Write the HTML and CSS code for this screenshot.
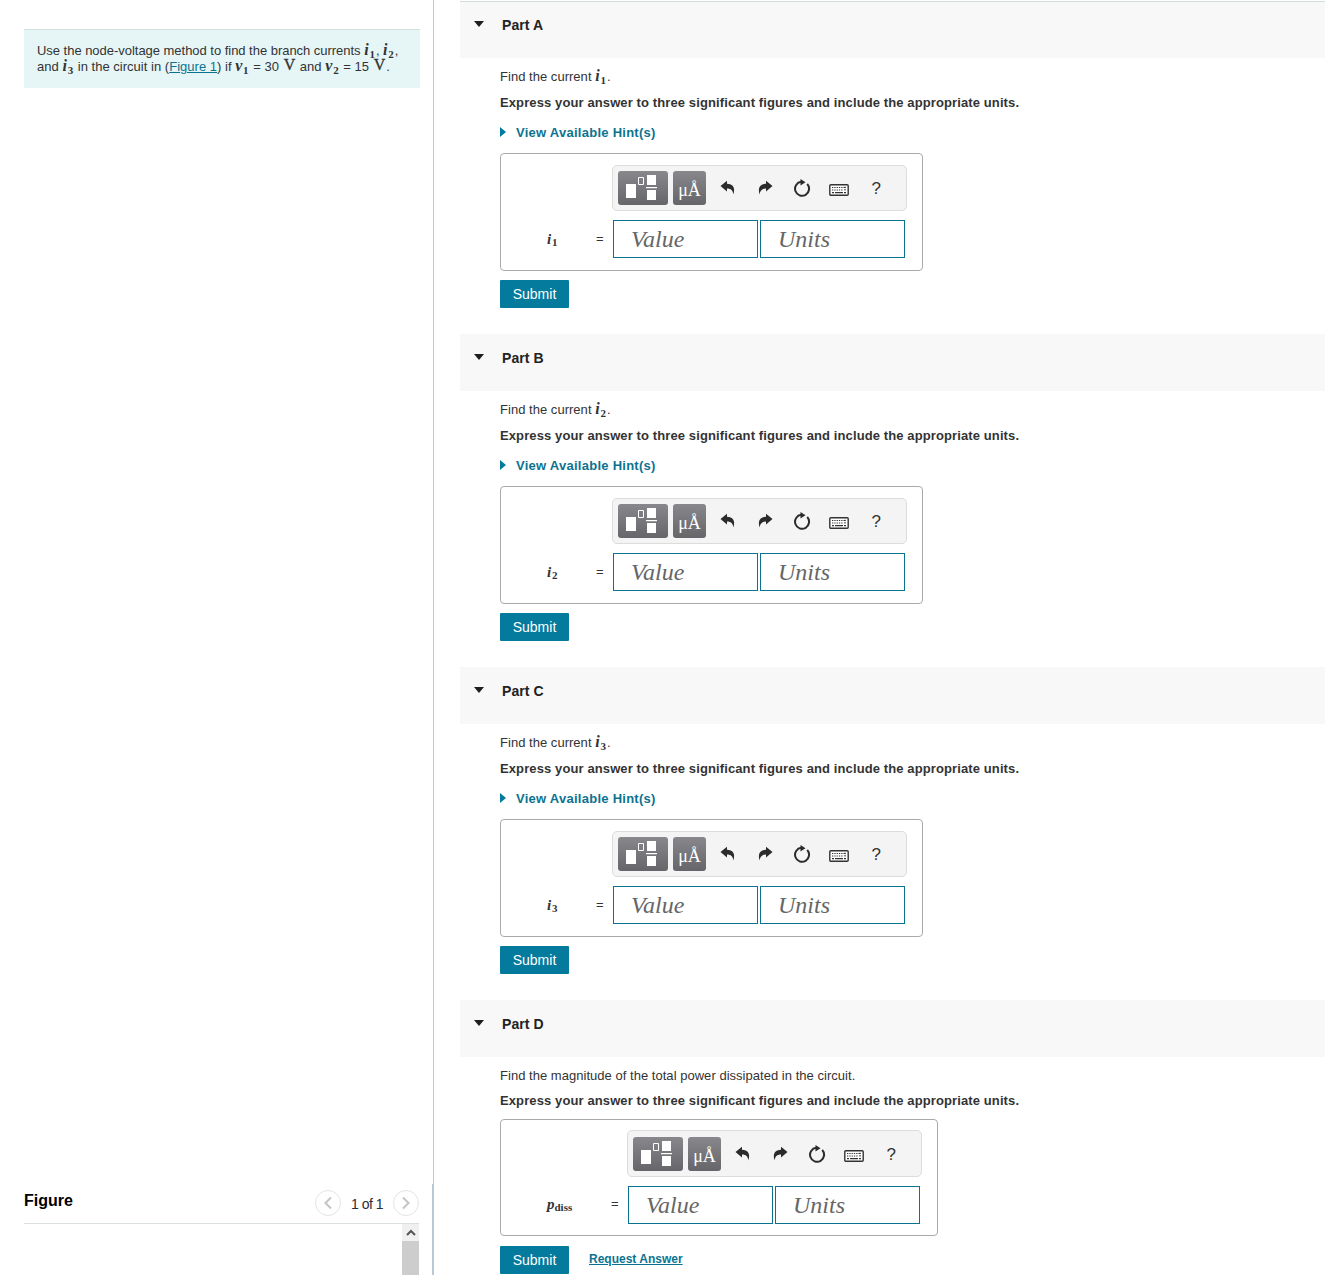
FILE: index.html
```html
<!DOCTYPE html>
<html lang="en">
<head>
  <meta charset="UTF-8" />
  <title>Node-voltage method</title>
  <link rel="stylesheet" href="styles.css">
</head>
<body>
  <!-- Shared icons -->
  <svg class="defs" width="0" height="0">
    <symbol id="templates" viewBox="0 0 50 34">
      <path d="M8 13h10v14H8zM29 4h9v10h-9zM29 19h9v10h-9zM28 16h11v1.300H28z" fill="#fff"/>
      <path d="M20.500 6.500h5v7h-5z" fill="none" stroke="#fff"/>
    </symbol>
    <symbol id="undo" viewBox="0 0 16 16">
      <path d="M.5 6L7 .8v3C12.500 3.800 15.800 7.500 13.300 14.500C13 10.500 11 8.500 7 8.500V11.500z" fill="#2b2b2b"/>
    </symbol>
    <symbol id="redo" viewBox="0 0 16 16">
      <path d="M15.500 6L9 .8v3C3.500 3.800 .2 7.500 2.700 14.500C3 10.500 5 8.500 9 8.500V11.500z" fill="#2b2b2b"/>
    </symbol>
    <symbol id="reset" viewBox="0 0 18 18">
      <path d="M14.200 5A7 7 0 1 1 8.300 2.800" fill="none" stroke="#2b2b2b" stroke-width="2"/>
      <path d="M7.500 0l5 3.200L7.500 6.500z" fill="#2b2b2b"/>
    </symbol>
    <symbol id="keyboard" viewBox="0 0 20 12">
      <rect x=".8" y=".8" width="18.400" height="10.400" rx="1" fill="#fff" stroke="#333" stroke-width="1.400"/>
      <path d="M3 3.500h14M3 6h11.500M16 2.800v4" fill="none" stroke="#333" stroke-width="1.200" stroke-dasharray="1.300 1"/>
      <path d="M3 8.700h2M6 8.700h8M15 8.700h2" stroke="#333" stroke-width="1.200"/>
    </symbol>
  </svg>

  <div class="page">
    <div class="left">
      <div class="problem">
        <div class="line line1">Use the node-voltage method to find the branch currents <span class="math">i<sub>1</sub></span>, <span class="math">i<sub>2</sub></span>,</div>
        <div class="line line2">and <span class="math">i<sub>3</sub></span> in the circuit in (<a href="#">Figure 1</a>) if <span class="math">v<sub>1</sub></span> = 30 <span class="unit">V</span> and <span class="math">v<sub>2</sub></span> = 15 <span class="unit">V</span>.</div>
      </div>
      <div class="figure">
        <div class="figure-head">
          <h2>Figure</h2>
          <span class="nav"><svg width="10" height="14" viewBox="0 0 10 14"><path d="M8 1.500L2.500 7L8 12.500"/></svg></span>
          <span class="count">1 of 1</span>
          <span class="nav"><svg width="10" height="14" viewBox="0 0 10 14"><path d="M2 1.500L7.500 7L2 12.500"/></svg></span>
        </div>
        <div class="scrollbar">
          <div class="up"><svg width="10" height="8" viewBox="0 0 10 8"><path d="M1 6L5 2L9 6"/></svg></div>
          <div class="thumb"></div>
        </div>
      </div>
    </div>
    <div class="divider"><div class="handle"></div></div>

    <div class="right">
      <div class="part first">
        <div class="part-head"><span class="arrow"></span>Part A</div>
        <div class="part-body">
          <p class="ask">Find the current <span class="math">i<sub>1</sub></span>.</p>
          <p class="express">Express your answer to three significant figures and include the appropriate units.</p>
          <div class="hint"><span class="tri"></span>View Available Hint(s)</div>
          <div class="answer">
            <div class="label"><span class="math">i<sub>1</sub></span></div>
            <div class="eq">=</div>
            <div class="entry">
              <div class="toolbar">
                <span class="btn wide"><svg width="50" height="34"><use href="#templates"/></svg></span>
                <span class="btn">μÅ</span>
                <span class="tool"><svg width="16" height="16"><use href="#undo"/></svg></span>
                <span class="tool"><svg width="16" height="16"><use href="#redo"/></svg></span>
                <span class="tool"><svg width="18" height="18"><use href="#reset"/></svg></span>
                <span class="tool kbd"><svg width="20" height="12"><use href="#keyboard"/></svg></span>
                <span class="tool help">?</span>
              </div>
              <div class="fields"><div class="field">Value</div><div class="field">Units</div></div>
            </div>
          </div>
          <div class="actions"><button class="submit">Submit</button></div>
        </div>
      </div>

      <div class="part">
        <div class="part-head"><span class="arrow"></span>Part B</div>
        <div class="part-body">
          <p class="ask">Find the current <span class="math">i<sub>2</sub></span>.</p>
          <p class="express">Express your answer to three significant figures and include the appropriate units.</p>
          <div class="hint"><span class="tri"></span>View Available Hint(s)</div>
          <div class="answer">
            <div class="label"><span class="math">i<sub>2</sub></span></div>
            <div class="eq">=</div>
            <div class="entry">
              <div class="toolbar">
                <span class="btn wide"><svg width="50" height="34"><use href="#templates"/></svg></span>
                <span class="btn">μÅ</span>
                <span class="tool"><svg width="16" height="16"><use href="#undo"/></svg></span>
                <span class="tool"><svg width="16" height="16"><use href="#redo"/></svg></span>
                <span class="tool"><svg width="18" height="18"><use href="#reset"/></svg></span>
                <span class="tool kbd"><svg width="20" height="12"><use href="#keyboard"/></svg></span>
                <span class="tool help">?</span>
              </div>
              <div class="fields"><div class="field">Value</div><div class="field">Units</div></div>
            </div>
          </div>
          <div class="actions"><button class="submit">Submit</button></div>
        </div>
      </div>

      <div class="part">
        <div class="part-head"><span class="arrow"></span>Part C</div>
        <div class="part-body">
          <p class="ask">Find the current <span class="math">i<sub>3</sub></span>.</p>
          <p class="express">Express your answer to three significant figures and include the appropriate units.</p>
          <div class="hint"><span class="tri"></span>View Available Hint(s)</div>
          <div class="answer">
            <div class="label"><span class="math">i<sub>3</sub></span></div>
            <div class="eq">=</div>
            <div class="entry">
              <div class="toolbar">
                <span class="btn wide"><svg width="50" height="34"><use href="#templates"/></svg></span>
                <span class="btn">μÅ</span>
                <span class="tool"><svg width="16" height="16"><use href="#undo"/></svg></span>
                <span class="tool"><svg width="16" height="16"><use href="#redo"/></svg></span>
                <span class="tool"><svg width="18" height="18"><use href="#reset"/></svg></span>
                <span class="tool kbd"><svg width="20" height="12"><use href="#keyboard"/></svg></span>
                <span class="tool help">?</span>
              </div>
              <div class="fields"><div class="field">Value</div><div class="field">Units</div></div>
            </div>
          </div>
          <div class="actions"><button class="submit">Submit</button></div>
        </div>
      </div>

      <div class="part last">
        <div class="part-head"><span class="arrow"></span>Part D</div>
        <div class="part-body">
          <p class="ask">Find the magnitude of the total power dissipated in the circuit.</p>
          <p class="express">Express your answer to three significant figures and include the appropriate units.</p>
          <div class="answer">
            <div class="label"><span class="math">p<sub>diss</sub></span></div>
            <div class="eq">=</div>
            <div class="entry">
              <div class="toolbar">
                <span class="btn wide"><svg width="50" height="34"><use href="#templates"/></svg></span>
                <span class="btn">μÅ</span>
                <span class="tool"><svg width="16" height="16"><use href="#undo"/></svg></span>
                <span class="tool"><svg width="16" height="16"><use href="#redo"/></svg></span>
                <span class="tool"><svg width="18" height="18"><use href="#reset"/></svg></span>
                <span class="tool kbd"><svg width="20" height="12"><use href="#keyboard"/></svg></span>
                <span class="tool help">?</span>
              </div>
              <div class="fields"><div class="field">Value</div><div class="field">Units</div></div>
            </div>
          </div>
          <div class="actions"><button class="submit">Submit</button><a href="#" class="request">Request Answer</a></div>
        </div>
      </div>
    </div>
  </div>
</body>
</html>
```
FILE: styles.css
```css
* { box-sizing: border-box; }
body { margin: 0; background: #fff; color: #333; font-family: "Liberation Sans", Arial, sans-serif; font-size: 13px; overflow: hidden; }
p, h2 { margin: 0; }
a { color: #0b7391; }
svg { display: block; }
.defs { position: absolute; }
.page { display: flex; height: 1275px; overflow: hidden; }

/* left column */
.left { width: 432px; flex: none; padding: 29px 12px 0 24px; display: flex; flex-direction: column; }
.problem { height: 59px; padding: 12px 0 0 13px; background: #e6f6f7; border-top: 1px solid #cfe0dd; white-space: nowrap; }
.line { height: 16px; line-height: 16px; }
.line1 { letter-spacing: -0.03px; }
.line2 { letter-spacing: 0.02px; }
.math { font: italic bold 16px/1 "Liberation Serif", serif; letter-spacing: 0.8px; }
.math sub { font-style: normal; font-size: 11px; line-height: 0; vertical-align: -3px; letter-spacing: 0; margin-right: 1px; }
.unit { font: 16px/1 "Liberation Serif", serif; -webkit-text-stroke: 0.3px #333; margin: 0 1px; position: relative; top: -1px; }
.figure { margin-top: auto; width: 395px; height: 91px; display: flex; flex-direction: column; }
.figure-head { height: 40px; display: flex; align-items: center; padding-bottom: 2px; border-bottom: 1px solid #d9dede; }
.figure-head h2 { flex: 1; font-size: 16px; line-height: 20px; color: #000; padding-bottom: 3px; }
.nav { width: 26px; height: 26px; border: 1px solid #e4e4e4; border-radius: 50%; display: flex; align-items: center; justify-content: center; }
.nav path { fill: none; stroke: #c4c4c4; stroke-width: 2; }
.count { width: 52px; text-align: center; font-size: 14px; letter-spacing: -0.5px; padding-top: 2px; color: #2b2b3a; }
.scrollbar { width: 17px; flex: 1; align-self: flex-end; background: #cdcdcd; }
.up { height: 17px; background: #f0f0f0; display: flex; align-items: center; justify-content: center; }
.up path { fill: none; stroke: #555; stroke-width: 2; }
.divider { width: 2px; flex: none; display: flex; align-items: flex-end; background: linear-gradient(to right, #fff 50%, #bfcdd3 50%); }
.handle { width: 2px; height: 91px; background: #b9c8d4; }

/* right column */
.right { flex: 1; padding: 1px 0 0 26px; }
.part { height: 333px; }
.part-head { height: 57px; padding: 0 0 10px 14px; background: #f8f8f8; display: flex; align-items: center; font-size: 14px; font-weight: bold; color: #222; letter-spacing: 0.1px; }
.first .part-head { border-top: 1px solid #d5dcdc; }
.arrow { border: 5px solid transparent; border-top: 6px solid #1e1e1e; border-bottom: 0; margin: 0 18px 2px 0; }
.part-body { padding: 9px 0 0 40px; }
.ask, .express { line-height: 20px; }
.ask { height: 20px; letter-spacing: 0.03px; }
.express { margin-top: 6px; font-weight: bold; letter-spacing: 0.11px; }
.hint { display: flex; align-items: center; margin-top: 10px; line-height: 20px; font-weight: bold; color: #0b7391; letter-spacing: 0.26px; }
.tri { border: 5px solid transparent; border-left: 6px solid #047a9c; border-right: 0; margin: 0 10px 2px 0; }
.answer { margin-top: 10px; width: 423px; height: 118px; display: flex; padding: 11px 0 0 46px; border: 1px solid #aaa; border-radius: 4px; }
.label { width: 46px; padding-top: 67px; }
.label .math { font-size: 15px; }
.label sub { font-size: 11px; vertical-align: -2px; }
.eq { width: 19px; padding: 66px 0 0 3px; }
.toolbar { width: 295px; height: 46px; display: flex; align-items: center; padding-left: 5px; background: #f4f4f4; border: 1px solid #dcdcdc; border-radius: 5px; }
.btn { width: 33px; height: 34px; display: flex; align-items: center; justify-content: center; border-radius: 3px; background: linear-gradient(#88888c, #66666a); color: #fff; font: 18px/1 "Liberation Serif", serif; margin-right: 3px; padding-top: 4px; }
.wide { width: 50px; margin-right: 5px; padding: 0; }
.tool { width: 37.2px; display: flex; justify-content: center; font-size: 17px; color: #333; }
.kbd { padding-top: 4px; }
.help { padding-top: 2px; }
.fields { display: flex; gap: 2px; padding: 9px 0 0 1px; }
.field { width: 145px; height: 38px; padding-left: 17px; border: 1px solid #0b7391; background: #fff; font: italic 24px/36px "Liberation Serif", serif; color: #666; }
.actions { display: flex; align-items: center; margin-top: 9px; }
.submit { width: 69px; height: 28px; padding: 0; border: 0; border-radius: 1px; background: #047a9c; color: #fff; font: 14px "Liberation Sans", Arial, sans-serif; }
.request { margin-left: 20px; font-size: 12px; font-weight: bold; padding-bottom: 3px; }
.last .express { margin-top: 5px; }
.last .answer { margin-top: 8px; width: 438px; height: 117px; padding-top: 10px; }
.last .toolbar { height: 47px; }
.last .label { width: 61px; }
.last .label .math { letter-spacing: 0; }
.last .actions { margin-top: 10px; }
```
